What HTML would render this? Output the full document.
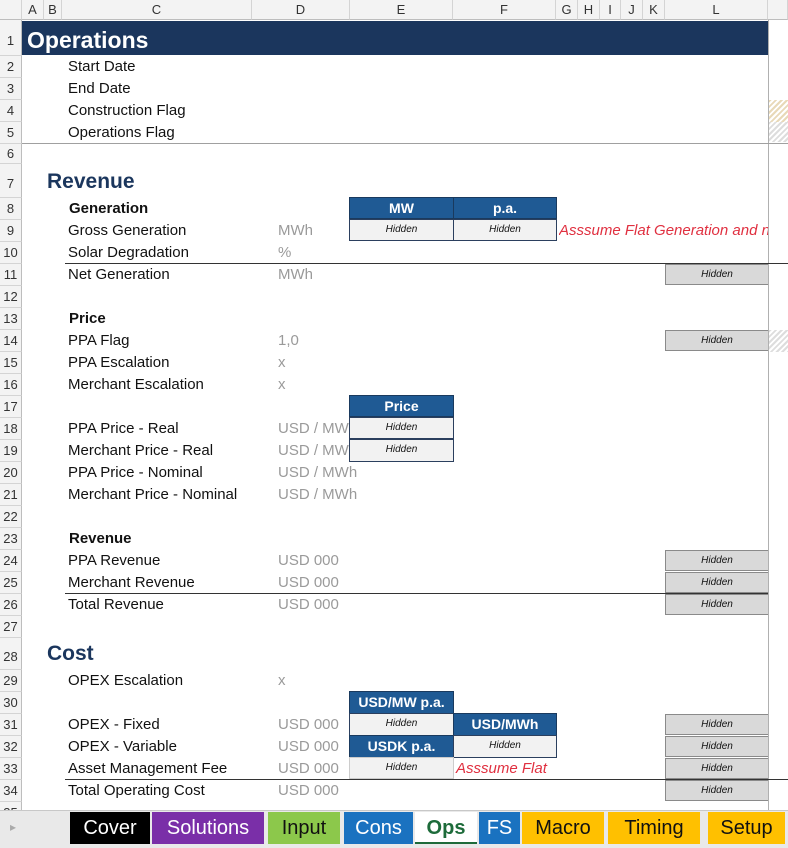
<!DOCTYPE html>
<html><head><meta charset="utf-8"><style>
*{margin:0;padding:0;box-sizing:border-box}
body{width:788px;height:848px;overflow:hidden;background:#fff;font-family:"Liberation Sans",sans-serif;position:relative;color:#111}
.a{position:absolute}
.ch{position:absolute;top:0;height:20px;background:#f3f3f3;border-right:1px solid #d4d4d4;border-bottom:1px solid #bdbdbd;font-size:13px;text-align:center;line-height:20px;color:#333}
.rh{position:absolute;left:0;width:22px;background:#f3f3f3;border-bottom:1px solid #d4d4d4;border-right:1px solid #bdbdbd;font-size:13px;text-align:center;color:#333}
.l{position:absolute;left:68px;font-size:15px;line-height:22px;white-space:nowrap}
.u{position:absolute;left:278px;font-size:15px;line-height:22px;color:#9a9a9a;white-space:nowrap}
.hd{position:absolute;background:#1f5a94;color:#fff;font-weight:bold;font-size:14px;text-align:center;border:1px solid #1a3a5e;line-height:20px}
.hi{position:absolute;background:#f2f2f2;font-style:italic;font-size:10px;text-align:center;border:1px solid #2b3f5e;line-height:20px}
.rb{position:absolute;left:665px;width:103px;height:21px;background:#d9d9d9;border:1px solid #8a8a8a;border-right:none;font-style:italic;font-size:10px;text-align:center;line-height:19px}
.ln{position:absolute;height:1px;background:#333}
.tab{position:absolute;top:812px;height:32px;font-size:20px;line-height:32px;text-align:center;color:#111}
</style></head><body>
<div class="ch" style="left:0;width:22px"></div>
<div class="ch" style="left:22px;width:22px">A</div>
<div class="ch" style="left:44px;width:18px">B</div>
<div class="ch" style="left:62px;width:190px">C</div>
<div class="ch" style="left:252px;width:98px">D</div>
<div class="ch" style="left:350px;width:103px">E</div>
<div class="ch" style="left:453px;width:103px">F</div>
<div class="ch" style="left:556px;width:22px">G</div>
<div class="ch" style="left:578px;width:22px">H</div>
<div class="ch" style="left:600px;width:21px">I</div>
<div class="ch" style="left:621px;width:22px">J</div>
<div class="ch" style="left:643px;width:22px">K</div>
<div class="ch" style="left:665px;width:103px">L</div>
<div class="ch" style="left:768px;width:20px"></div>

<div class="rh" style="top:20px;height:36px;line-height:42px">1</div>
<div class="rh" style="top:56px;height:22px;line-height:22px">2</div>
<div class="rh" style="top:78px;height:22px;line-height:22px">3</div>
<div class="rh" style="top:100px;height:22px;line-height:22px">4</div>
<div class="rh" style="top:122px;height:22px;line-height:22px">5</div>
<div class="rh" style="top:144px;height:20px;line-height:20px">6</div>
<div class="rh" style="top:164px;height:34px;line-height:40px">7</div>
<div class="rh" style="top:198px;height:22px;line-height:22px">8</div>
<div class="rh" style="top:220px;height:22px;line-height:22px">9</div>
<div class="rh" style="top:242px;height:22px;line-height:22px">10</div>
<div class="rh" style="top:264px;height:22px;line-height:22px">11</div>
<div class="rh" style="top:286px;height:22px;line-height:22px">12</div>
<div class="rh" style="top:308px;height:22px;line-height:22px">13</div>
<div class="rh" style="top:330px;height:22px;line-height:22px">14</div>
<div class="rh" style="top:352px;height:22px;line-height:22px">15</div>
<div class="rh" style="top:374px;height:22px;line-height:22px">16</div>
<div class="rh" style="top:396px;height:22px;line-height:22px">17</div>
<div class="rh" style="top:418px;height:22px;line-height:22px">18</div>
<div class="rh" style="top:440px;height:22px;line-height:22px">19</div>
<div class="rh" style="top:462px;height:22px;line-height:22px">20</div>
<div class="rh" style="top:484px;height:22px;line-height:22px">21</div>
<div class="rh" style="top:506px;height:22px;line-height:22px">22</div>
<div class="rh" style="top:528px;height:22px;line-height:22px">23</div>
<div class="rh" style="top:550px;height:22px;line-height:22px">24</div>
<div class="rh" style="top:572px;height:22px;line-height:22px">25</div>
<div class="rh" style="top:594px;height:22px;line-height:22px">26</div>
<div class="rh" style="top:616px;height:22px;line-height:22px">27</div>
<div class="rh" style="top:638px;height:32px;line-height:38px">28</div>
<div class="rh" style="top:670px;height:22px;line-height:22px">29</div>
<div class="rh" style="top:692px;height:22px;line-height:22px">30</div>
<div class="rh" style="top:714px;height:22px;line-height:22px">31</div>
<div class="rh" style="top:736px;height:22px;line-height:22px">32</div>
<div class="rh" style="top:758px;height:22px;line-height:22px">33</div>
<div class="rh" style="top:780px;height:22px;line-height:22px">34</div>
<div class="rh" style="top:802px;height:10px;line-height:22px">35</div>

<div class="a" style="left:22px;top:21px;width:746px;height:34px;background:#1b365d"></div>
<div class="a" style="left:27px;top:25px;color:#fff;font-weight:bold;font-size:23px;line-height:30px">Operations</div>
<div class="a" style="left:768px;top:20px;width:1px;height:792px;background:#b0b0b0"></div>
<div class="a" style="left:22px;top:143px;width:766px;height:1px;background:#a0a0a0"></div>
<div class="a" style="left:769px;top:100px;width:19px;height:22px;background:repeating-linear-gradient(135deg,#e8d9b8 0 2px,#fff 2px 4px)"></div>
<div class="a" style="left:769px;top:122px;width:19px;height:20px;background:repeating-linear-gradient(135deg,#ddd 0 2px,#fff 2px 4px)"></div>
<div class="a" style="left:769px;top:330px;width:19px;height:22px;background:repeating-linear-gradient(135deg,#ddd 0 2px,#fff 2px 4px)"></div>

<div class="l" style="top:56px">Start Date</div>
<div class="l" style="top:78px">End Date</div>
<div class="l" style="top:100px">Construction Flag</div>
<div class="l" style="top:122px">Operations Flag</div>

<div class="a" style="left:47px;top:170px;font-size:21px;font-weight:bold;color:#1b365d">Revenue</div>
<div class="l" style="top:198px;left:69px;font-weight:bold">Generation</div>
<div class="l" style="top:220px">Gross Generation</div><div class="u" style="top:220px">MWh</div>
<div class="l" style="top:242px">Solar Degradation</div><div class="u" style="top:242px">%</div>
<div class="ln" style="left:65px;top:263px;width:723px"></div>
<div class="l" style="top:264px">Net Generation</div><div class="u" style="top:264px">MWh</div>
<div class="l" style="top:308px;left:69px;font-weight:bold">Price</div>
<div class="l" style="top:330px">PPA Flag</div><div class="u" style="top:330px">1,0</div>
<div class="l" style="top:352px">PPA Escalation</div><div class="u" style="top:352px">x</div>
<div class="l" style="top:374px">Merchant Escalation</div><div class="u" style="top:374px">x</div>
<div class="l" style="top:418px">PPA Price - Real</div><div class="u" style="top:418px">USD / MW</div>
<div class="l" style="top:440px">Merchant Price - Real</div><div class="u" style="top:440px">USD / MW</div>
<div class="l" style="top:462px">PPA Price - Nominal</div><div class="u" style="top:462px">USD / MWh</div>
<div class="l" style="top:484px">Merchant Price - Nominal</div><div class="u" style="top:484px">USD / MWh</div>
<div class="l" style="top:528px;left:69px;font-weight:bold">Revenue</div>
<div class="l" style="top:550px">PPA Revenue</div><div class="u" style="top:550px">USD 000</div>
<div class="l" style="top:572px">Merchant Revenue</div><div class="u" style="top:572px">USD 000</div>
<div class="ln" style="left:65px;top:593px;width:703px"></div>
<div class="l" style="top:594px">Total Revenue</div><div class="u" style="top:594px">USD 000</div>

<div class="a" style="left:47px;top:642px;font-size:21px;font-weight:bold;color:#1b365d">Cost</div>
<div class="l" style="top:670px">OPEX Escalation</div><div class="u" style="top:670px">x</div>
<div class="l" style="top:714px">OPEX - Fixed</div><div class="u" style="top:714px">USD 000</div>
<div class="l" style="top:736px">OPEX - Variable</div><div class="u" style="top:736px">USD 000</div>
<div class="l" style="top:758px">Asset Management Fee</div><div class="u" style="top:758px">USD 000</div>
<div class="ln" style="left:65px;top:779px;width:723px"></div>
<div class="l" style="top:780px">Total Operating Cost</div><div class="u" style="top:780px">USD 000</div>

<div class="hd" style="left:349px;top:197px;width:105px;height:22px">MW</div>
<div class="hd" style="left:453px;top:197px;width:104px;height:22px">p.a.</div>
<div class="hi" style="left:349px;top:219px;width:105px;height:22px">Hidden</div>
<div class="hi" style="left:453px;top:219px;width:104px;height:22px">Hidden</div>
<div class="a" style="left:559px;top:220px;font-size:15px;line-height:22px;color:#e03040;font-style:italic;white-space:nowrap;width:209px;overflow:hidden">Asssume Flat Generation and no</div>

<div class="hd" style="left:349px;top:395px;width:105px;height:22px">Price</div>
<div class="hi" style="left:349px;top:417px;width:105px;height:22px">Hidden</div>
<div class="hi" style="left:349px;top:439px;width:105px;height:23px">Hidden</div>

<div class="hd" style="left:349px;top:691px;width:105px;height:23px">USD/MW p.a.</div>
<div class="hi" style="left:349px;top:713px;width:105px;height:23px">Hidden</div>
<div class="hd" style="left:453px;top:713px;width:104px;height:23px">USD/MWh</div>
<div class="hd" style="left:349px;top:735px;width:105px;height:23px">USDK p.a.</div>
<div class="hi" style="left:453px;top:735px;width:104px;height:23px">Hidden</div>
<div class="hi" style="left:349px;top:757px;width:105px;height:22px;border-color:#ccc">Hidden</div>
<div class="a" style="left:456px;top:758px;font-size:15px;line-height:22px;color:#e03040;font-style:italic">Asssume Flat</div>

<div class="rb" style="top:264px">Hidden</div>
<div class="rb" style="top:330px">Hidden</div>
<div class="rb" style="top:550px">Hidden</div>
<div class="rb" style="top:572px">Hidden</div>
<div class="rb" style="top:594px">Hidden</div>
<div class="rb" style="top:714px">Hidden</div>
<div class="rb" style="top:736px">Hidden</div>
<div class="rb" style="top:758px">Hidden</div>
<div class="rb" style="top:780px">Hidden</div>

<div class="a" style="left:0;top:810px;width:788px;height:38px;background:#e9e9e9;border-top:1px solid #c8c8c8"></div>
<div class="a" style="left:10px;top:820px;color:#aaa;font-size:12px">&#9656;</div>
<div class="tab" style="left:70px;width:80px;background:#000;color:#fff">Cover</div>
<div class="tab" style="left:152px;width:112px;background:#7a2fa8;color:#fff">Solutions</div>
<div class="tab" style="left:268px;width:72px;background:#8cc84b">Input</div>
<div class="tab" style="left:344px;width:69px;background:#1a72c0;color:#fff">Cons</div>
<div class="tab" style="left:415px;width:62px;background:#fff;color:#1d6b3a;font-weight:bold;border-bottom:2px solid #1d6b3a">Ops</div>
<div class="tab" style="left:479px;width:41px;background:#1a72c0;color:#fff">FS</div>
<div class="tab" style="left:522px;width:82px;background:#ffc000">Macro</div>
<div class="tab" style="left:608px;width:92px;background:#ffc000">Timing</div>
<div class="tab" style="left:708px;width:77px;background:#ffc000">Setup</div>
</body></html>
